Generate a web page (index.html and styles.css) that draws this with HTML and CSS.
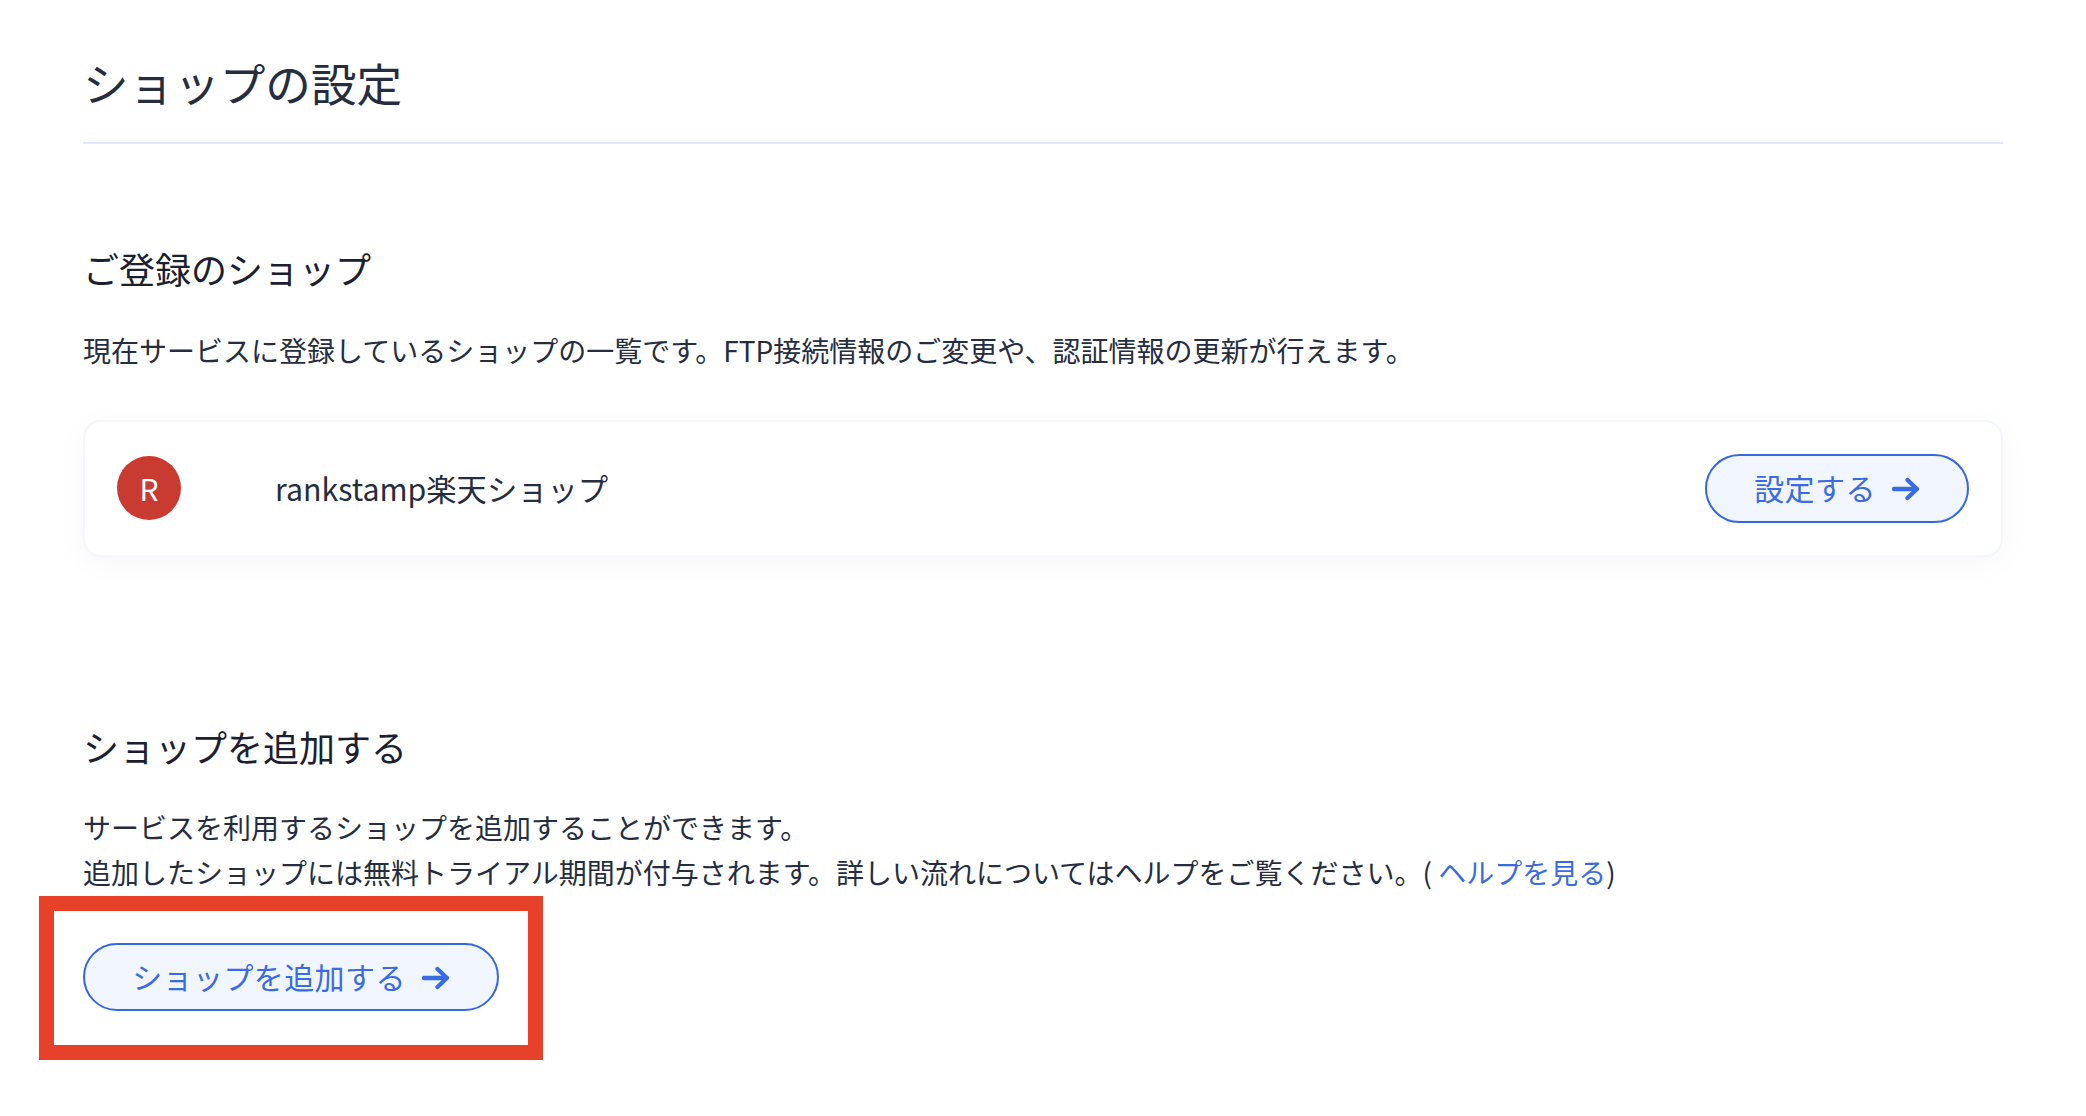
FILE: index.html
```html
<!DOCTYPE html>
<html lang="ja">
<head>
<meta charset="utf-8">
<title>ショップの設定</title>
<link rel="stylesheet" href="styles.css">
</head>
<body>
<main class="page">
  <h1 class="page-title">ショップの設定</h1>

  <section class="section section-shops">
    <h2 class="section-title">ご登録のショップ</h2>
    <p class="text">現在サービスに登録しているショップの一覧です。FTP接続情報のご変更や、認証情報の更新が行えます。</p>
    <div class="shop-card">
      <div class="avatar">R</div>
      <div class="shop-name">rankstamp楽天ショップ</div>
      <a class="pill-btn pill-settings" href="#"><span class="pill-label">設定する</span>
        <svg class="arrow" viewBox="0 0 28 24" aria-hidden="true"><path d="M2 12H25M15.500 3L25 12L15.500 21"/></svg>
      </a>
    </div>
  </section>

  <section class="section section-add">
    <h2 class="section-title">ショップを追加する</h2>
    <p class="text">サービスを利用するショップを追加することができます。<br>追加したショップには無料トライアル期間が付与されます。詳しい流れについてはヘルプをご覧ください。( <a class="link" href="#">ヘルプを見る</a>)</p>
    <a class="pill-btn pill-add" href="#"><span class="pill-label">ショップを追加する</span>
      <svg class="arrow" viewBox="0 0 28 24" aria-hidden="true"><path d="M2 12H25M15.500 3L25 12L15.500 21"/></svg>
    </a>
  </section>
  <div class="highlight"></div>
</main>
</body>
</html>
```
FILE: styles.css
```css
* { box-sizing: border-box; }
html, body { margin: 0; padding: 0; background: #fff; }
body {
  font-family: "Noto Sans CJK JP", "Noto Sans", sans-serif;
  color: #252d3f;
  width: 2086px;
  height: 1116px;
  overflow: hidden;
}
.page { position: relative; padding: 0 83px; height: 100%; }
.page-title {
  margin: 0;
  height: 144px;
  padding-top: 52px;
  font-size: 45.600px;
  line-height: 60px;
  font-weight: 400;
  border-bottom: 2px solid #dfe9fb;
}
.section-shops { padding-top: 98px; }
.section-add { padding-top: 163px; }
.section-title {
  margin: 0;
  font-size: 36px;
  line-height: 52px;
  font-weight: 400;
  color: #1a2030;
}
.text {
  margin: 34px 0 0;
  font-size: 28px;
  line-height: 45.500px;
}
.section-add .text { margin-top: 33px; }
.shop-card {
  margin-top: 46px;
  height: 137px;
  display: flex;
  align-items: center;
  padding: 0 32px;
  background: #fff;
  border: 2px solid #f3f6fe;
  border-radius: 18px;
  box-shadow: 0 6px 32px rgba(30, 40, 70, .035);
}
.avatar {
  width: 64px;
  height: 64px;
  flex: none;
  border-radius: 50%;
  background: #c93a31;
  color: #fff;
  font-size: 30px;
  display: flex;
  align-items: center;
  justify-content: center;
}
.shop-name {
  margin-left: 94px;
  flex: 1;
  font-size: 30.300px;
}
.pill-btn {
  display: flex;
  align-items: center;
  justify-content: center;
  height: 69px;
  border: 2px solid #3467e2;
  border-radius: 35px;
  background: #f0f5fe;
  color: #3b6be3;
  text-decoration: none;
  font-size: 30px;
  letter-spacing: .4px;
}
.pill-label { position: relative; top: -1px; }
.pill-settings { width: 264px; flex: none; }
.pill-add { width: 416px; height: 68px; margin-top: 47px; }
.arrow {
  width: 28px;
  height: 24px;
  margin: 2px 0 0 16px;
  fill: none;
  stroke: currentColor;
  stroke-width: 4.300;
  stroke-linecap: round;
  stroke-linejoin: round;
}
.link { color: #3b6be3; text-decoration: none; }
.highlight {
  position: absolute;
  left: 39px;
  top: 896px;
  width: 504px;
  height: 164px;
  border: 15px solid #e8412a;
}
```
